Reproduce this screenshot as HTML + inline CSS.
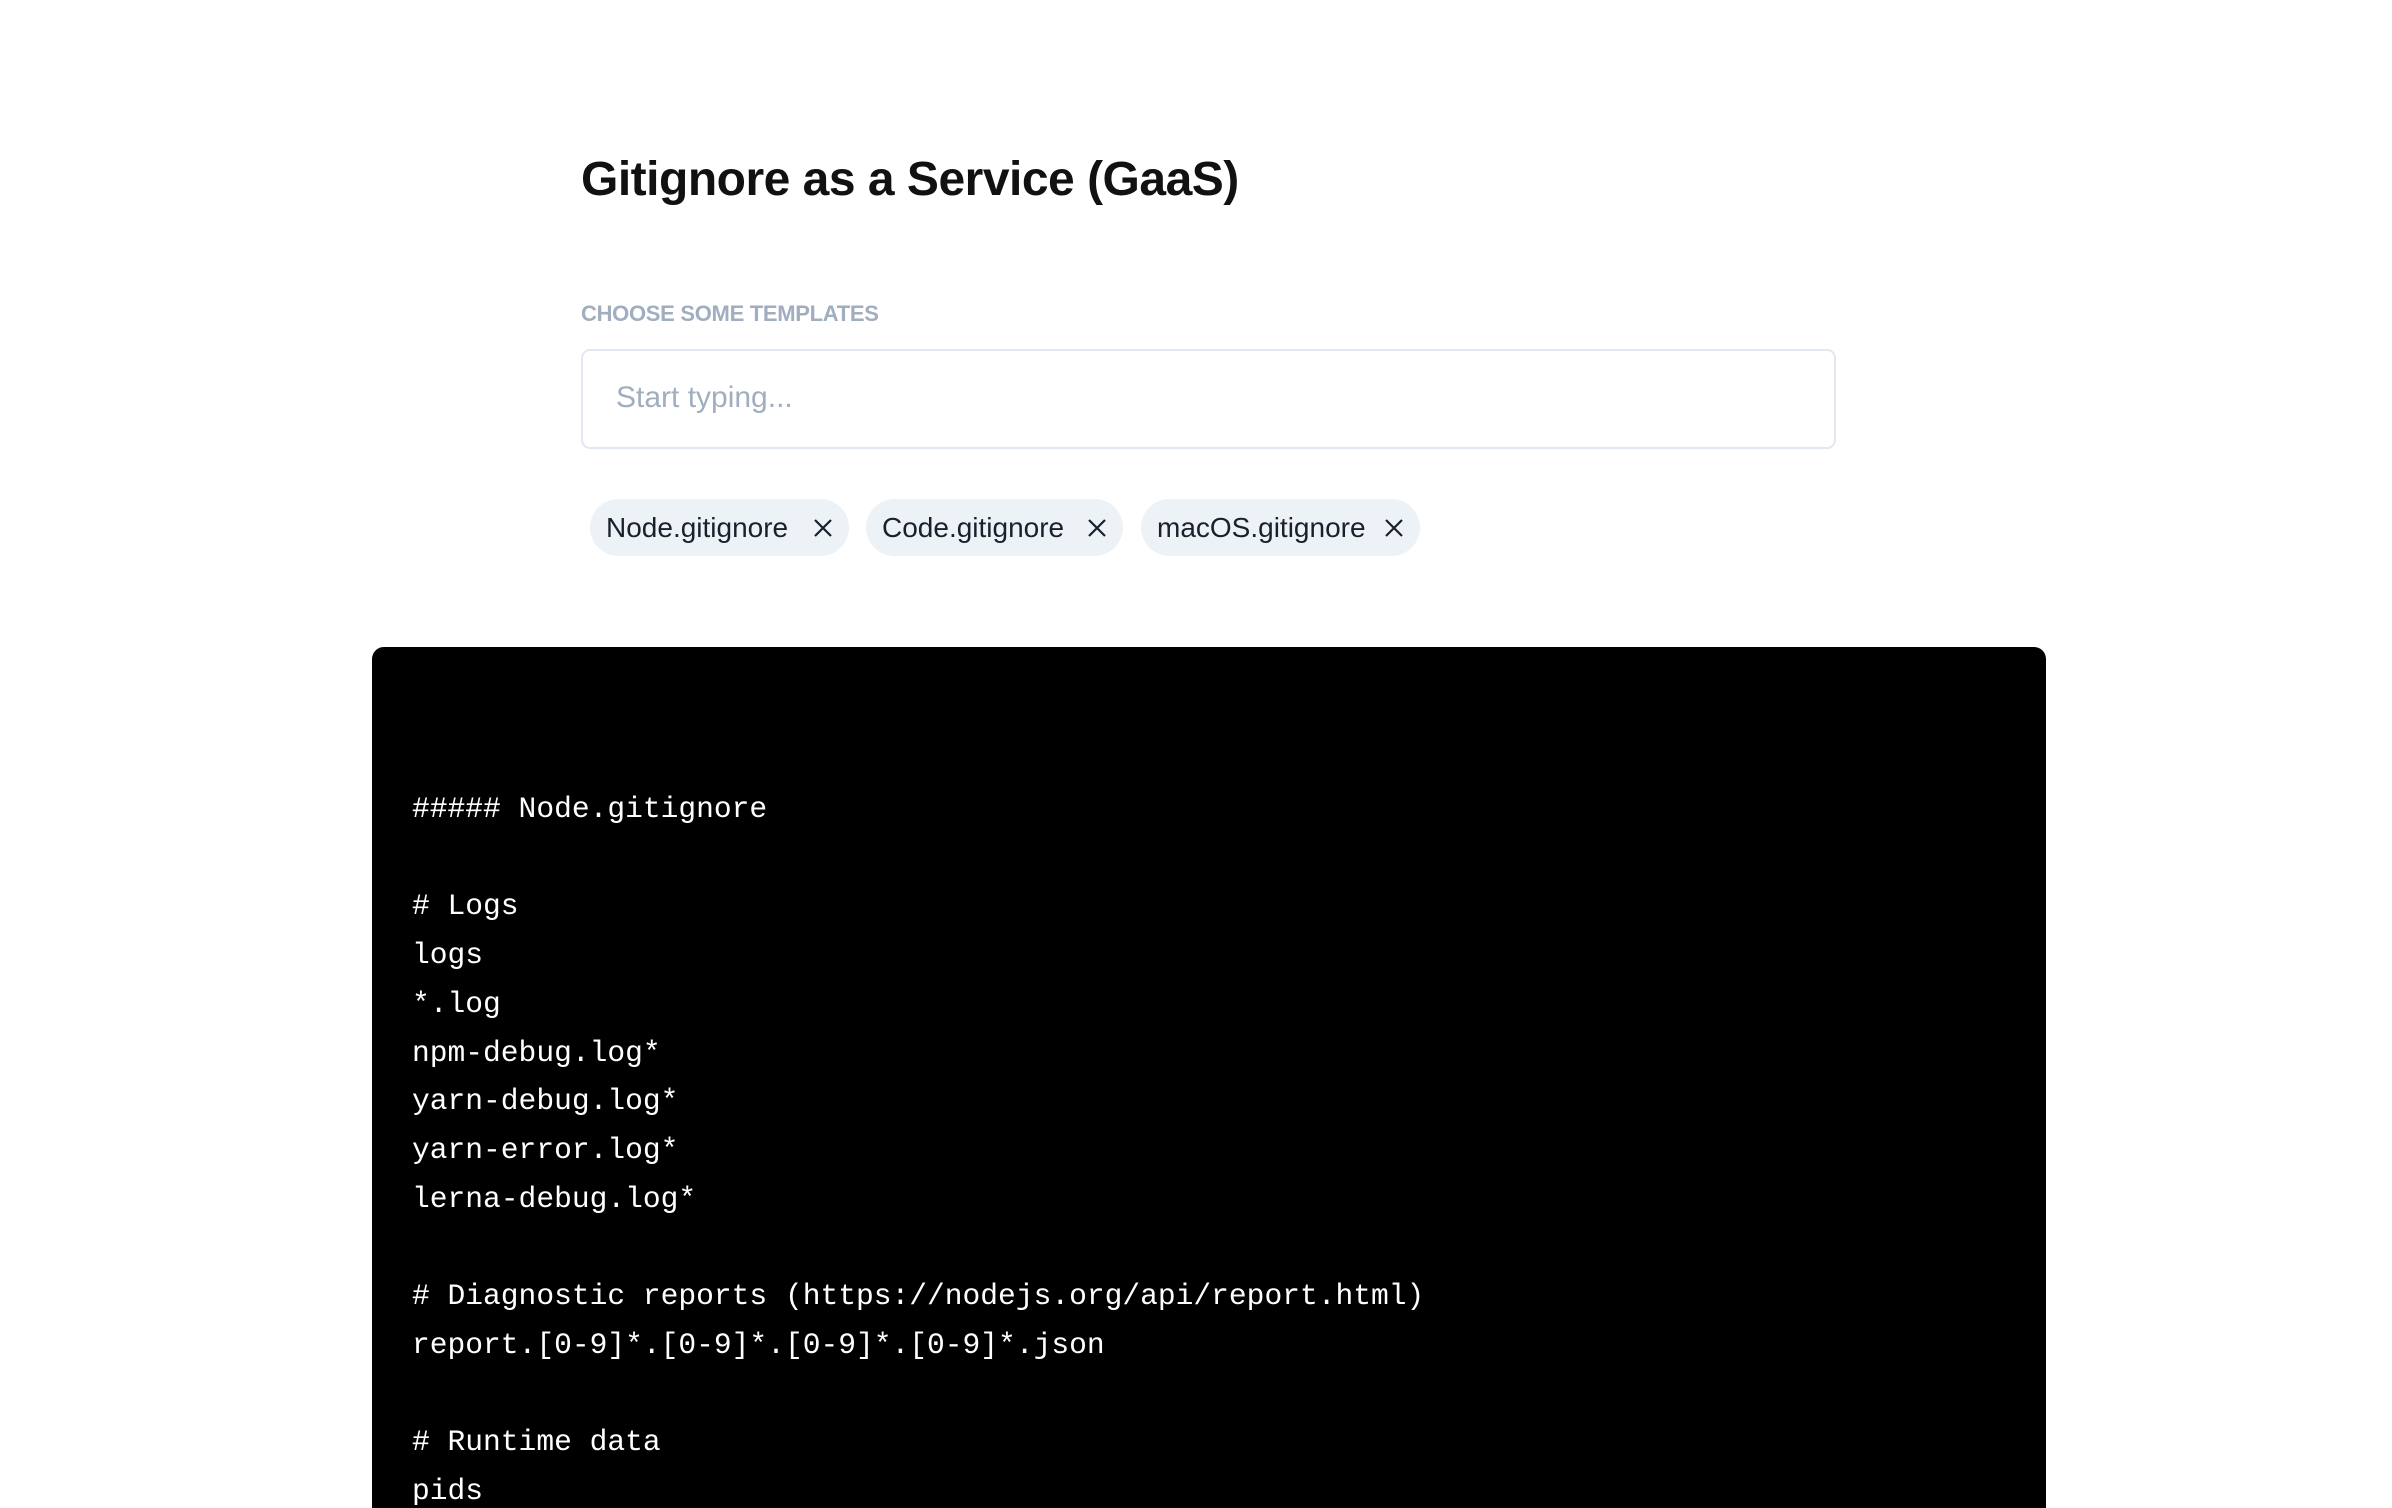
<!DOCTYPE html>
<html><head><meta charset="utf-8"><style>
html,body{margin:0;padding:0;background:#fff;width:2392px;height:1508px;overflow:hidden;font-family:"Liberation Sans",sans-serif;position:relative;}
h1{position:absolute;left:581px;top:150px;margin:0;font-size:48px;font-weight:bold;color:#111;letter-spacing:-0.5px;line-height:60px;}
.label{position:absolute;left:581px;top:301px;font-size:22px;font-weight:bold;color:#a0aec0;letter-spacing:-0.3px;}
.input{position:absolute;left:581px;top:349px;width:1251px;height:96px;border:2px solid #e2e8f0;border-radius:9px;box-sizing:content-box;}
.input span{position:absolute;left:33px;top:30px;font-size:30px;color:#a0aec0;}
.chip{position:absolute;top:499px;height:57px;background:#edf2f7;border-radius:29px;font-size:28px;color:#1a202c;line-height:57px;padding-left:16px;box-sizing:border-box;}
.chip svg{position:absolute;top:19px;right:16px;}
.code{position:absolute;left:372px;top:647px;width:1674px;height:861px;background:#000;border-radius:12px 12px 0 0;overflow:hidden;}
pre{margin:0;position:absolute;left:40px;top:138px;font-family:"Liberation Mono","DejaVu Sans Mono",monospace;font-size:29.6px;line-height:48.7px;color:#fff;}
</style></head><body>
<h1>Gitignore as a Service (GaaS)</h1>
<div class="label">CHOOSE SOME TEMPLATES</div>
<div class="input"><span>Start typing...</span></div>
<div class="chip" style="left:590px;width:259px">Node.gitignore<svg width="20" height="20" viewBox="0 0 20 20"><path d="M2 2L18 18M18 2L2 18" stroke="#1a202c" stroke-width="2.2"/></svg></div>
<div class="chip" style="left:866px;width:257px">Code.gitignore<svg width="20" height="20" viewBox="0 0 20 20"><path d="M2 2L18 18M18 2L2 18" stroke="#1a202c" stroke-width="2.2"/></svg></div>
<div class="chip" style="left:1141px;width:279px">macOS.gitignore<svg width="20" height="20" viewBox="0 0 20 20"><path d="M2 2L18 18M18 2L2 18" stroke="#1a202c" stroke-width="2.2"/></svg></div>
<div class="code"><pre>##### Node.gitignore

# Logs
logs
*.log
npm-debug.log*
yarn-debug.log*
yarn-error.log*
lerna-debug.log*

# Diagnostic reports (https://nodejs.org/api/report.html)
report.[0-9]*.[0-9]*.[0-9]*.[0-9]*.json

# Runtime data
pids
*.pid
*.seed
*.pid.lock</pre></div>
</body></html>
